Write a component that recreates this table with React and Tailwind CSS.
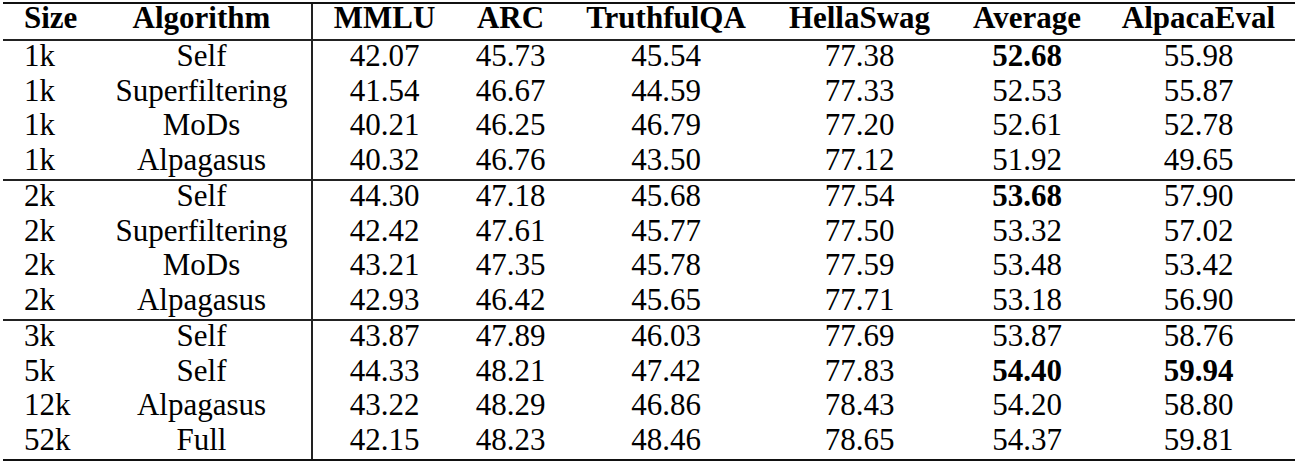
import React from 'react';

const cols = 'grid grid-cols-[89px_221px_143px_109px_202px_185px_150px_193px]';

const groups = [
  [
    ['1k', 'Self', '42.07', '45.73', '45.54', '77.38', '52.68', '55.98', [6]],
    ['1k', 'Superfiltering', '41.54', '46.67', '44.59', '77.33', '52.53', '55.87', []],
    ['1k', 'MoDs', '40.21', '46.25', '46.79', '77.20', '52.61', '52.78', []],
    ['1k', 'Alpagasus', '40.32', '46.76', '43.50', '77.12', '51.92', '49.65', []],
  ],
  [
    ['2k', 'Self', '44.30', '47.18', '45.68', '77.54', '53.68', '57.90', [6]],
    ['2k', 'Superfiltering', '42.42', '47.61', '45.77', '77.50', '53.32', '57.02', []],
    ['2k', 'MoDs', '43.21', '47.35', '45.78', '77.59', '53.48', '53.42', []],
    ['2k', 'Alpagasus', '42.93', '46.42', '45.65', '77.71', '53.18', '56.90', []],
  ],
  [
    ['3k', 'Self', '43.87', '47.89', '46.03', '77.69', '53.87', '58.76', []],
    ['5k', 'Self', '44.33', '48.21', '47.42', '77.83', '54.40', '59.94', [6, 7]],
    ['12k', 'Alpagasus', '43.22', '48.29', '46.86', '78.43', '54.20', '58.80', []],
    ['52k', 'Full', '42.15', '48.23', '48.46', '78.65', '54.37', '59.81', []],
  ],
];

const headers = ['Size', 'Algorithm', 'MMLU', 'ARC', 'TruthfulQA', 'HellaSwag', 'Average', 'AlpacaEval'];

function Row({ cells, bold }) {
  return (
    <div className={`${cols} h-[34.5px] leading-[30px]`}>
      {cells.map((c, i) => (
        <div
          key={i}
          className={
            (i === 0 ? 'pl-[21px] text-left ' : 'text-center ') +
            (i === 1 ? 'border-r-2 border-[#222] ' : '') +
            (bold.includes(i) ? 'font-bold' : '')
          }
        >
          {c}
        </div>
      ))}
    </div>
  );
}

export default function App() {
  return (
    <div className="min-h-[464px] bg-white pt-[2px] pl-[3px]">
      <div className="w-[1292px] border-t-2 border-b-2 border-[#111] font-[family-name:Liberation_Serif,serif] text-[31px] text-black">
        <div className={`${cols} h-[35px] leading-[27px] font-bold`}>
          {headers.map((h, i) => (
            <div
              key={h}
              className={
                (i === 0 ? 'pl-[21px] text-left ' : 'text-center ') +
                (i === 1 ? 'border-r-2 border-[#222]' : '')
              }
            >
              {h}
            </div>
          ))}
        </div>
        {groups.map((g, gi) => (
          <div key={gi} className="border-t-2 border-[#222]">
            {g.map((r, ri) => (
              <Row key={ri} cells={r.slice(0, 8)} bold={r[8]} />
            ))}
          </div>
        ))}
      </div>
    </div>
  );
}
